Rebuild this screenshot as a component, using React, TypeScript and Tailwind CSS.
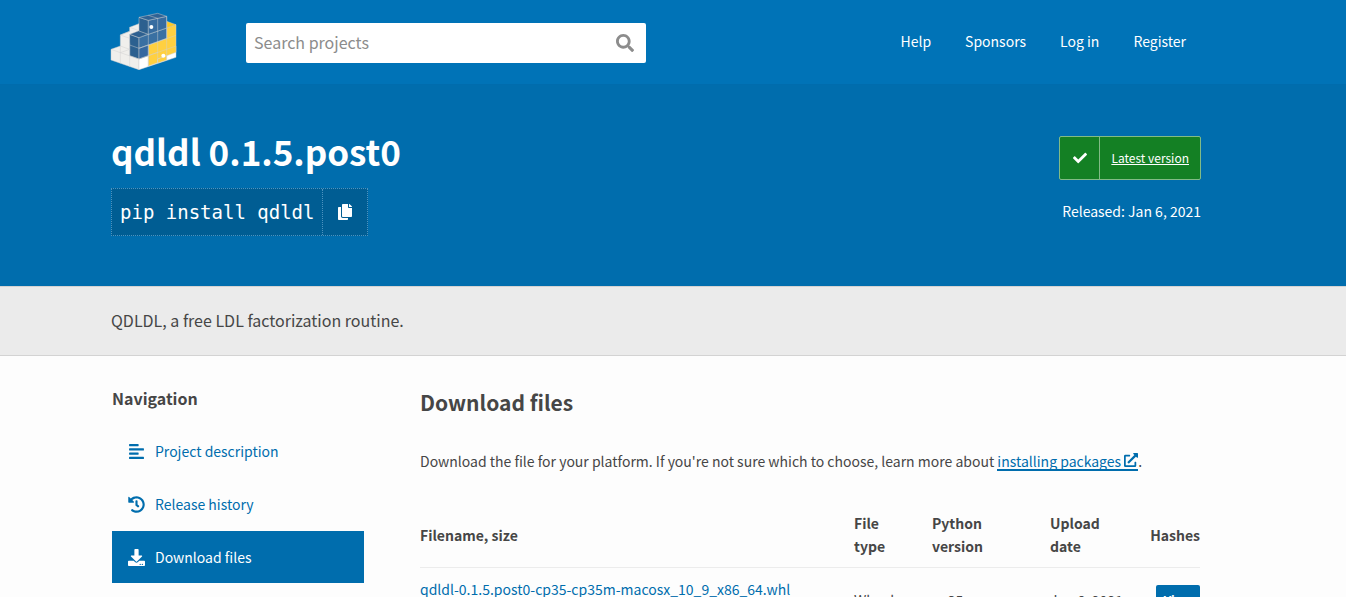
import {ReactElement} from 'react';
import {FaSearch,FaCheck,FaCopy,FaAlignLeft,FaHistory,FaDownload,FaExternalLinkAlt} from 'react-icons/fa';

const headerLinks = ['Help','Sponsors','Log in','Register'];

const sections = [
  {id:'description',title:'Project description',icon:FaAlignLeft},
  {id:'history',title:'Release history',icon:FaHistory},
  {id:'files',title:'Download files',icon:FaDownload}
];

const files = [
  {name:'qdldl-0.1.5.post0-cp35-cp35m-macosx_10_9_x86_64.whl',size:'(98.2 kB)',type:'Wheel',python:'cp35',date:'Jan 6, 2021'}
];

function Logo() : ReactElement {
  return <svg width="72" height="62" viewBox="0 0 216 186" role="img" aria-label="PyPI">
    <g stroke="#cfcfcf" strokeWidth="1.4" strokeLinejoin="round">
      {/* white cubes */}
      <path fill="#f0efec" d="M9 118 37 108V75L65 64V52L93 41V179L9 150Z"/>
      <path fill="#ffffff" d="M93 147 204 108V142L93 179Z"/>
      {/* yellow cubes */}
      <path fill="#ffd040" d="M121 105 176 85V53L204 44V127L149 147V158L121 168Z"/>
      <path fill="#ffd040" d="M149 147 176 137V150L149 159Z"/>
      <path fill="#ffc91f" d="M176 34 204 44 176 54Z"/>
      {/* blue cubes */}
      <path fill="#2c608f" d="M65 73 93 83V147L65 137Z"/>
      <path fill="#3a70a2" d="M93 83 176 54V85L93 115Z"/>
      <path fill="#3568a0" d="M93 115 121 105V137L93 147Z"/>
      <path fill="#2e6090" d="M65 73 93 62 121 72 93 83Z"/>
      <path fill="#2c608f" d="M93 22 121 31V73L93 63Z"/>
      <path fill="#376ca0" d="M121 31 176 19V54L121 73Z"/>
      <path fill="#2f6294" d="M93 22 149 10 176 19 121 31Z"/>
      {/* edges between cubes */}
      <path fill="none" d="M37 108V160M65 98V170M9 118 37 128 65 118M37 128 93 147M37 75 65 85M37 108 65 118M65 52 93 62M37 75 65 64M65 105 93 115 204 76M93 147 204 108M121 73V168M149 25V159M176 19V150M121 16 149 25M121 137 149 127"/>
    </g>
    <circle cx="130" cy="51" r="6" fill="#ffffff"/>
    <circle cx="166" cy="137" r="6" fill="#ffffff"/>
  </svg>;
}

function Header() : ReactElement {
  return <header className="bg-[#0073b7] pr-[34px] border-b border-[#006cad]">
    <div className="max-w-[1090px] mx-auto h-[84px] flex items-center">
      <a href="#" className="w-[138px] shrink-0 -ml-[3px] pb-[2px]"><Logo/></a>
      <form className="flex w-[400px] h-10 mt-px bg-white rounded-xs">
        <input type="text" aria-label="Search projects" placeholder="Search projects" className="flex-1 min-w-0 px-2 pb-[2px] text-base text-[#464646] placeholder:text-[#8c8c8c] outline-none"/>
        <button type="button" aria-label="Search" className="px-3 text-[#8c8c8c]"><FaSearch size={18}/></button>
      </form>
      <nav className="ml-auto pr-[15px] pb-[2px] flex gap-[34px] text-sm text-white">
        {headerLinks.map(function(title){
          return <a key={title} href="#">{title}</a>;
        })}
      </nav>
    </div>
  </header>;
}

function Banner() : ReactElement {
  return <section className="bg-[#006dad] pr-[34px] text-white">
    <div className="max-w-[1090px] mx-auto h-[201px] flex justify-between items-start">
      <div className="pt-12">
        <h1 className="text-[35px] leading-9 font-semibold">qdldl 0.1.5.post0</h1>
        <div className="mt-[19px] flex w-max bg-[#005d93] border border-dotted border-[#4d93bf]">
          <code className="px-2 text-[19px] leading-[46px] font-['DejaVu_Sans_Mono',monospace]">pip install qdldl</code>
          <button type="button" aria-label="Copy" className="px-[14px] border-l border-dotted border-[#4d93bf]"><FaCopy size={16}/></button>
        </div>
      </div>
      <div className="pt-[51px] flex flex-col items-end">
        <a href="#" className="flex h-11 items-stretch rounded-xs border border-[#82bb86] bg-[#148024] text-xs">
          <span className="w-10 flex items-center justify-center border-r border-[#82bb86]"><FaCheck size={14}/></span>
          <span className="px-[11px] flex items-center underline">Latest version</span>
        </a>
        <p className="mt-[19px] text-sm leading-6">Released: Jan 6, 2021</p>
      </div>
    </div>
  </section>;
}

function Sidebar() : ReactElement {
  return <nav className="w-[252px] shrink-0 ml-px">
    <h2 className="text-base leading-6 font-semibold mb-[15px]">Navigation</h2>
    <ul>
      {sections.map(function(section){
        const Icon = section.icon;
        const active = section.id === 'files';
        return <li key={section.id}>
          <a href={'#'+section.id} className={'flex items-center gap-[10px] h-[52px] mb-px px-4 text-sm '+(active ? 'bg-[#006dad] text-white' : 'text-[#006dad]')}>
            <Icon size={17}/>{section.title}
          </a>
        </li>;
      })}
    </ul>
  </nav>;
}

function FileTable() : ReactElement {
  return <table className="w-full mt-[30px] text-sm leading-[23px] text-left">
    <thead>
      <tr className="border-b border-[#ececec]">
        <th className="py-[9px]">Filename, size</th>
        <th className="py-[9px] w-[78px]">File<br/>type</th>
        <th className="py-[9px] w-[118px]">Python<br/>version</th>
        <th className="py-[9px] w-[92px]">Upload<br/>date</th>
        <th className="py-[9px] w-[58px] text-right">Hashes</th>
      </tr>
    </thead>
    <tbody>
      {files.map(function(file){
        return <tr key={file.name} className="border-b border-[#ececec]">
          <td className="pt-[10px] pb-2"><a href="#" className="block text-[#006dad]">{file.name}</a>{file.size}</td>
          <td>{file.type}</td>
          <td>{file.python}</td>
          <td>{file.date}</td>
          <td className="text-right"><button type="button" className="h-[30px] px-2 rounded-xs bg-[#006dad] text-white text-xs font-bold">View</button></td>
        </tr>;
      })}
    </tbody>
  </table>;
}

export default function App() : ReactElement {
  return <div className="h-screen overflow-hidden bg-[#fdfdfd] text-[#464646] font-['Noto_Sans_CJK_SC',sans-serif]">
    <Header/>
    <Banner/>
    <section className="bg-[#ebebeb] border-y border-[#d3d3d3] pr-[34px]">
      <p className="max-w-[1090px] mx-auto pt-[21px] pb-[23px] text-base leading-6">QDLDL, a free LDL factorization routine.</p>
    </section>
    <div className="pr-[34px]">
      <div className="max-w-[1090px] mx-auto pt-[30px] flex gap-14">
        <Sidebar/>
        <main className="flex-1 min-w-0 pr-px">
          <h2 className="text-[21px] leading-8 font-semibold">Download files</h2>
          <p className="mt-[31px] text-sm leading-6">
            Download the file for your platform. If you're not sure which to choose, learn more about <a href="#" className="inline-block leading-4 text-[#006dad] border-b-2 border-[#006dad]">installing packages <FaExternalLinkAlt size={14} className="inline align-baseline"/></a>.
          </p>
          <FileTable/>
        </main>
      </div>
    </div>
  </div>;
}
